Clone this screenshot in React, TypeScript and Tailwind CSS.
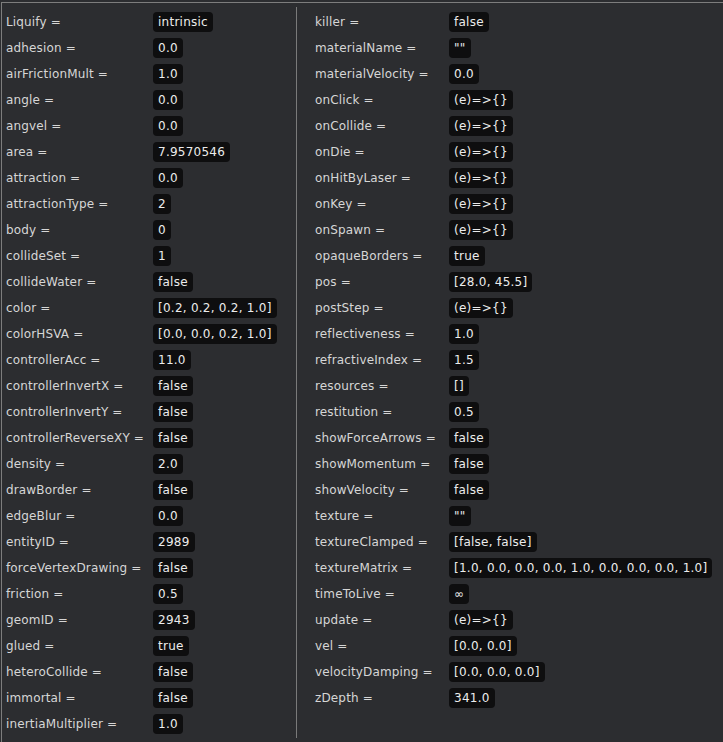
import React from "react";

const left: [string, string][] = [
  ["Liquify", "intrinsic"],
  ["adhesion", "0.0"],
  ["airFrictionMult", "1.0"],
  ["angle", "0.0"],
  ["angvel", "0.0"],
  ["area", "7.9570546"],
  ["attraction", "0.0"],
  ["attractionType", "2"],
  ["body", "0"],
  ["collideSet", "1"],
  ["collideWater", "false"],
  ["color", "[0.2, 0.2, 0.2, 1.0]"],
  ["colorHSVA", "[0.0, 0.0, 0.2, 1.0]"],
  ["controllerAcc", "11.0"],
  ["controllerInvertX", "false"],
  ["controllerInvertY", "false"],
  ["controllerReverseXY", "false"],
  ["density", "2.0"],
  ["drawBorder", "false"],
  ["edgeBlur", "0.0"],
  ["entityID", "2989"],
  ["forceVertexDrawing", "false"],
  ["friction", "0.5"],
  ["geomID", "2943"],
  ["glued", "true"],
  ["heteroCollide", "false"],
  ["immortal", "false"],
  ["inertiaMultiplier", "1.0"],
];

const right: [string, string][] = [
  ["killer", "false"],
  ["materialName", '""'],
  ["materialVelocity", "0.0"],
  ["onClick", "(e)=>{}"],
  ["onCollide", "(e)=>{}"],
  ["onDie", "(e)=>{}"],
  ["onHitByLaser", "(e)=>{}"],
  ["onKey", "(e)=>{}"],
  ["onSpawn", "(e)=>{}"],
  ["opaqueBorders", "true"],
  ["pos", "[28.0, 45.5]"],
  ["postStep", "(e)=>{}"],
  ["reflectiveness", "1.0"],
  ["refractiveIndex", "1.5"],
  ["resources", "[]"],
  ["restitution", "0.5"],
  ["showForceArrows", "false"],
  ["showMomentum", "false"],
  ["showVelocity", "false"],
  ["texture", '""'],
  ["textureClamped", "[false, false]"],
  ["textureMatrix", "[1.0, 0.0, 0.0, 0.0, 1.0, 0.0, 0.0, 0.0, 1.0]"],
  ["timeToLive", "∞"],
  ["update", "(e)=>{}"],
  ["vel", "[0.0, 0.0]"],
  ["velocityDamping", "[0.0, 0.0, 0.0]"],
  ["zDepth", "341.0"],
];

function Val({ v }: { v: string }) {
  return (
    <span className="inline-flex items-center h-[20px] px-[5px] rounded-[4px] bg-[#0e0e0f] text-[#ececec] whitespace-nowrap tracking-[0.25px]">
      {v}
    </span>
  );
}

function Row({ k, v, labelW }: { k: string; v: string; labelW: string }) {
  return (
    <div className="flex items-center h-[26px]">
      <div className={`${labelW} shrink-0 text-[#d6d6d6] whitespace-nowrap tracking-[0.15px]`}>{k} =</div>
      <Val v={v} />
    </div>
  );
}

export default function App() {
  return (
    <div
      className="w-[723px] h-[742px] bg-[#2c2d30] overflow-hidden text-[12px] leading-none"
      style={{ fontFamily: '"DejaVu Sans", Verdana, sans-serif' }}
    >
      <div className="mt-[2px] ml-[1px] h-[740px] border-t border-l border-[#7d7d7d] flex">
        <div className="w-[294px] shrink-0 pt-[6px] pl-[4px]">
          {left.map(([k, v]) => (
            <Row key={k} k={k} v={v} labelW="w-[147px]" />
          ))}
        </div>
        <div className="w-px bg-[#7a7a7a] mt-[4px] mb-[4px] shrink-0" />
        <div className="flex-1 pt-[6px] pl-[18px]">
          {right.map(([k, v]) => (
            <Row key={k} k={k} v={v} labelW="w-[134px]" />
          ))}
        </div>
      </div>
    </div>
  );
}
